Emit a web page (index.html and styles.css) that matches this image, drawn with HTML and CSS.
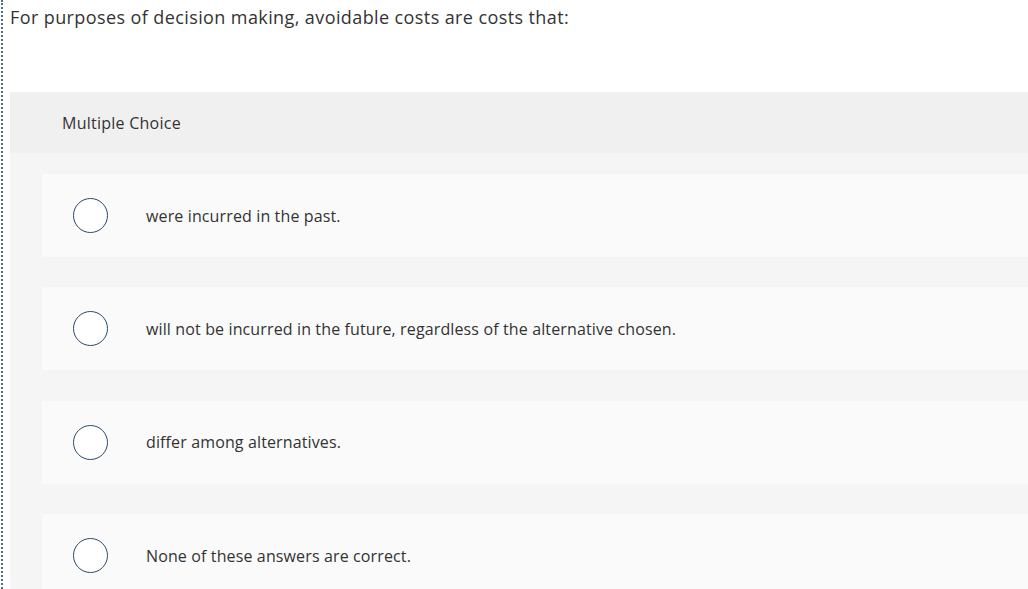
FILE: index.html
```html
<!DOCTYPE html>
<html>
<head>
<meta charset="utf-8">
<link rel="stylesheet" href="styles.css">
</head>
<body>
<div class="page">
  <p class="question">For purposes of decision making, avoidable costs are costs that:</p>
  <div class="mc">
    <div class="mc-header">Multiple Choice</div>
    <div class="options">
      <div class="option"><span class="radio"></span><span class="label">were incurred in the past.</span></div>
      <div class="option"><span class="radio"></span><span class="label">will not be incurred in the future, regardless of the alternative chosen.</span></div>
      <div class="option"><span class="radio"></span><span class="label">differ among alternatives.</span></div>
      <div class="option"><span class="radio"></span><span class="label">None of these answers are correct.</span></div>
    </div>
  </div>
</div>
</body>
</html>
```
FILE: styles.css
```css
html, body {
  margin: 0;
  padding: 0;
  background: #ffffff;
  overflow: hidden;
}
.page {
  margin-left: 1px;
  border-left: 2px dotted #4f6d8c;
  padding-left: 7px;
  min-height: 589px;
  font-family: "Open Sans", sans-serif;
  color: #333333;
}
.question {
  margin: 0;
  padding-top: 5px;
  font-size: 18px;
  line-height: 24px;
  height: 87px;
  letter-spacing: 0.4px;
}
.mc {
  background: #f5f5f5;
}
.mc-header {
  background: #f0f0f0;
  height: 61px;
  display: flex;
  align-items: center;
  padding-left: 52px;
  font-size: 16px;
  letter-spacing: 0.25px;
  color: #333333;
}
.options {
  padding: 21px 0 0 32px;
  display: flex;
  flex-direction: column;
  gap: 30.4px;
}
.option {
  background: #fafafa;
  height: 83px;
  display: flex;
  align-items: center;
  padding-left: 31px;
}
.radio {
  width: 33px;
  height: 33px;
  border: 1px solid #2c4a68;
  border-radius: 50%;
  background: #ffffff;
  flex: none;
}
.label {
  margin-left: 38px;
  font-size: 16px;
  letter-spacing: 0.13px;
  color: #333333;
}
```
